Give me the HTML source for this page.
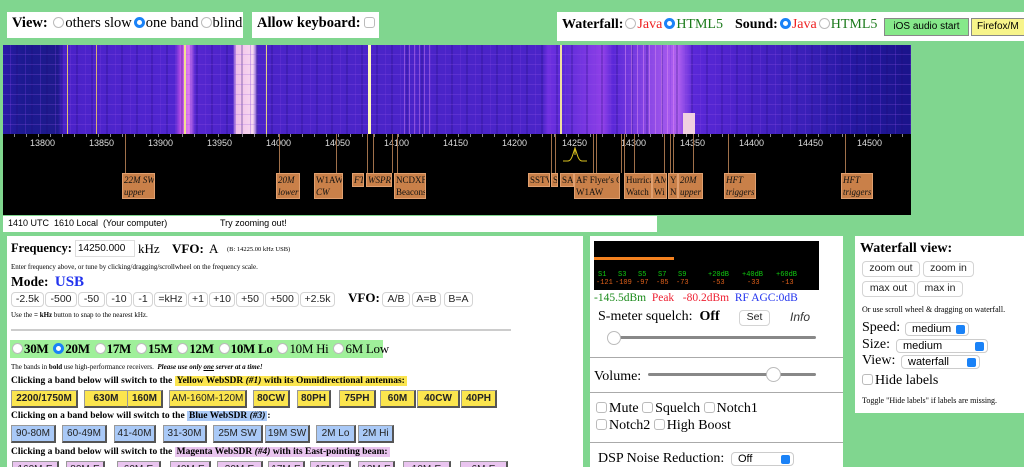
<!DOCTYPE html>
<html><head><meta charset="utf-8"><style>
*{margin:0;padding:0;box-sizing:border-box}
html,body{width:1024px;height:467px;overflow:hidden}
body{background:#80d68f;position:relative;font-family:"Liberation Serif",serif;color:#000}
.a{position:absolute;white-space:nowrap}
.box{position:absolute;background:#fff}
.s{font-family:"Liberation Sans",sans-serif}
.b{font-weight:bold}
.btn{position:absolute;background:#fff;border:1px solid #d4d4d4;border-radius:4px;font:10.5px "Liberation Sans",sans-serif;text-align:center;line-height:13px;color:#222;white-space:nowrap}
.bb{position:absolute;border:1px solid #999;border-right:2px solid #555;border-bottom:2px solid #555;font:bold 10px "Liberation Sans",sans-serif;text-align:center;line-height:15px;color:#222;white-space:nowrap;overflow:hidden}
.y{background:#fbe54e}.bl{background:#a9c9f7;font-weight:normal}.m{background:#e9c4ef;font-weight:normal}
.rad{display:inline-block;width:11px;height:11px;border-radius:50%;border:1px solid #bbb;background:#fff;vertical-align:-1px;margin:0 1px 0 2px}
.on{border:3.5px solid #1a82f7}
.cb{display:inline-block;width:11px;height:11px;border-radius:3px;border:1px solid #bbb;background:#fff;vertical-align:-1px;margin-right:2px}
.lab{position:absolute;top:173px;height:26px;background:#c98049;border:1px solid #e0a070;font:italic 9px/12px "Liberation Serif",serif;color:#111;overflow:hidden;padding-left:1px;white-space:nowrap}
.ln{position:absolute;top:134px;width:1px;background:#a0704a}
.tk{position:absolute;top:138px;color:#ddd;font:9px "Liberation Sans",sans-serif}
.hr{position:absolute;height:1px;background:#aaa}
.sel{position:absolute;background:#fff;border:1px solid #ccc;border-radius:4px;font:11px "Liberation Sans",sans-serif;line-height:13px;padding-left:6px}
.sel i{position:absolute;right:3px;top:2px;width:9px;height:9px;border-radius:2px;background:#1a82f7}
.hd{font-size:9.5px;font-weight:bold}
</style></head><body>

<div class="box" style="left:7px;top:12px;width:236px;height:26px"></div>
<div class="a" style="left:12px;top:15px;font-size:14.5px"><b>View:</b> <span class="rad"></span>others slow<span class="rad on"></span>one band<span class="rad"></span>blind</div>
<div class="box" style="left:252px;top:12px;width:127px;height:26px"></div>
<div class="a b" style="left:257px;top:15px;font-size:14.5px">Allow keyboard: <span class="cb"></span></div>

<div class="box" style="left:557px;top:12px;width:467px;height:29px"></div>
<div class="a" style="left:562px;top:17px;font-size:14px"><b>Waterfall:</b><span class="rad"></span><span style="color:#e22">Java</span><span class="rad on"></span><span style="color:#1a7a1a">HTML5</span></div>
<div class="a" style="left:735px;top:17px;font-size:14px"><b>Sound:</b><span class="rad on"></span><span style="color:#e22">Java</span><span class="rad"></span><span style="color:#1a7a1a">HTML5</span></div>
<div class="a s" style="left:884px;top:18px;width:85px;height:18px;background:#86e98a;border:1px solid #888;font-size:10px;line-height:16px;text-align:center">iOS audio start</div>
<div class="a s" style="left:971px;top:18px;width:60px;height:18px;background:#f7f48a;border:1px solid #888;font-size:10px;line-height:16px;padding-left:5px">Firefox/M</div>

<!-- waterfall -->
<div class="a" style="left:3px;top:45px;width:908px;height:89px;background:linear-gradient(90deg,#2a1aa8 0px,#1c1a90 20px,#1e1a8c 55px,#4a22c8 60px,#5026d0 172px,#c050e8 178px,#e080f0 186px,#5526d0 192px,#4a24c8 230px,#f0c0e8 233px,#f8d8f0 250px,#4a24c8 255px,#4a24c8 540px,#7030e0 545px,#5a2ad8 560px,#9040e8 600px,#5a28d8 610px,#b060f0 675px,#5a28d8 690px,#4a22c8 740px,#3a20b8 800px,#2418a0 850px,#1a148a 908px)"></div>
<div class="a" style="left:3px;top:45px;width:908px;height:89px;background:repeating-linear-gradient(0deg,transparent 0 9px,rgba(150,90,230,.25) 9px 10px),repeating-linear-gradient(90deg,transparent 0 7px,rgba(120,60,220,.3) 7px 8px,transparent 8px 13px,rgba(30,10,120,.25) 13px 15px)"></div>
<div class="a" style="left:67px;top:45px;width:1px;height:89px;background:#e0c070"></div>
<div class="a" style="left:96px;top:45px;width:1px;height:89px;background:#d8b070"></div>
<div class="a" style="left:184px;top:45px;width:2px;height:89px;background:#f0e090"></div>
<div class="a" style="left:266px;top:45px;width:1px;height:89px;background:#e0d080"></div>
<div class="a" style="left:368px;top:45px;width:3px;height:89px;background:#fff8c0"></div>
<div class="a" style="left:560px;top:45px;width:2px;height:89px;background:#f0e0a0"></div>
<div class="a" style="left:683px;top:113px;width:12px;height:21px;background:#f0d0e0"></div>
<div class="a" style="left:400px;top:45px;width:30px;height:89px;background:repeating-linear-gradient(90deg,transparent 0 4px,rgba(200,120,240,.5) 4px 5px)"></div>
<div class="a" style="left:620px;top:45px;width:55px;height:89px;background:repeating-linear-gradient(90deg,transparent 0 5px,rgba(220,140,240,.5) 5px 6px)"></div>

<!-- scale -->
<div class="a" style="left:3px;top:134px;width:908px;height:81px;background:#000"></div>
<div class="a" style="left:3px;top:134px;width:908px;height:3px;background:repeating-linear-gradient(90deg,transparent 0 11px,#888 11px 12px)"></div>
<div class="tk" style="left:30px">13800</div><div class="tk" style="left:89px">13850</div><div class="tk" style="left:148px">13900</div><div class="tk" style="left:207px">13950</div><div class="tk" style="left:266px">14000</div><div class="tk" style="left:325px">14050</div><div class="tk" style="left:384px">14100</div><div class="tk" style="left:443px">14150</div><div class="tk" style="left:502px">14200</div><div class="tk" style="left:562px">14250</div><div class="tk" style="left:621px">14300</div><div class="tk" style="left:680px">14350</div><div class="tk" style="left:739px">14400</div><div class="tk" style="left:798px">14450</div><div class="tk" style="left:857px">14500</div>
<svg class="a" style="left:562px;top:146px" width="26" height="16"><path d="M1 15 H6 Q9 15 11 8 L13 2 L15 8 Q17 15 20 15 H25 M13 2 V9" stroke="#d8c020" fill="none"/></svg>
<div class="ln" style="left:125px;height:39px"></div><div class="ln" style="left:279px;height:39px"></div><div class="ln" style="left:336px;height:39px"></div><div class="ln" style="left:367px;height:39px"></div><div class="ln" style="left:373px;height:39px"></div><div class="ln" style="left:392px;height:39px"></div><div class="ln" style="left:397px;height:39px"></div>
<div class="ln" style="left:551px;height:39px"></div><div class="ln" style="left:555px;height:39px"></div><div class="ln" style="left:593px;height:39px"></div><div class="ln" style="left:596px;height:39px"></div><div class="ln" style="left:621px;height:39px"></div><div class="ln" style="left:624px;height:39px"></div><div class="ln" style="left:634px;height:39px"></div><div class="ln" style="left:664px;height:39px"></div><div class="ln" style="left:670px;height:39px"></div><div class="ln" style="left:673px;height:39px"></div><div class="ln" style="left:693px;height:39px"></div><div class="ln" style="left:728px;height:39px"></div><div class="ln" style="left:845px;height:39px"></div>
<div class="lab" style="left:122px;width:33px">22M SW<br>upper</div>
<div class="lab" style="left:276px;width:24px">20M<br>lower</div>
<div class="lab" style="left:314px;width:29px;font-style:normal">W1AW<br><i>CW</i></div>
<div class="lab" style="left:352px;width:12px;height:14px">FT</div>
<div class="lab" style="left:366px;width:26px;height:14px">WSPR</div>
<div class="lab" style="left:394px;width:32px;font-style:normal">NCDXF<br>Beacons</div>
<div class="lab" style="left:528px;width:22px;height:14px;font-style:normal">SSTV</div>
<div class="lab" style="left:551px;width:7px;height:14px;font-style:normal">S</div>
<div class="lab" style="left:560px;width:14px;height:14px;font-style:normal">SA</div>
<div class="lab" style="left:574px;width:46px;font-style:normal">AF Flyer's C<br>W1AW</div>
<div class="lab" style="left:624px;width:28px;font-style:normal">Hurrica<br>Watch</div>
<div class="lab" style="left:652px;width:15px;font-style:normal">AM<br>Wi</div>
<div class="lab" style="left:668px;width:10px;font-style:normal">Y<br>N</div>
<div class="lab" style="left:678px;width:25px">20M<br>upper</div>
<div class="lab" style="left:724px;width:32px">HFT<br>triggers</div>
<div class="lab" style="left:841px;width:32px">HFT<br>triggers</div>

<div class="box" style="left:3px;top:216px;width:654px;height:16px"></div>
<div class="a s" style="left:8px;top:218px;font-size:9px">1410 UTC&nbsp; 1610 Local&nbsp; (Your computer)</div>
<div class="a s" style="left:220px;top:218px;font-size:9px">Try zooming out!</div>

<!-- left panel -->
<div class="box" style="left:7px;top:236px;width:576px;height:231px"></div>
<div class="a b" style="left:11px;top:241px;font-size:12.5px">Frequency:</div>
<div class="a s" style="left:75px;top:240px;width:60px;height:17px;border:1px solid #ddd;font-size:10px;line-height:15px;padding-left:2px">14250.000</div>
<div class="a" style="left:138px;top:241px;font-size:13px">kHz</div>
<div class="a b" style="left:172px;top:241px;font-size:13px">VFO:</div>
<div class="a" style="left:209px;top:241px;font-size:13px">A</div>
<div class="a" style="left:227px;top:246px;font-size:6.5px">(B: 14225.00 kHz USB)</div>
<div class="a" style="left:11px;top:263px;font-size:7px">Enter frequency above, or tune by clicking/dragging/scrollwheel on the frequency scale.</div>
<div class="a b" style="left:11px;top:274px;font-size:13.5px">Mode: <span style="color:#2233ee;font-size:15px;margin-left:3px">USB</span></div>
<div class="btn" style="left:11px;top:292px;width:33px;height:15px">-2.5k</div><div class="btn" style="left:45px;top:292px;width:32px;height:15px">-500</div><div class="btn" style="left:78px;top:292px;width:27px;height:15px">-50</div><div class="btn" style="left:106px;top:292px;width:26px;height:15px">-10</div><div class="btn" style="left:133px;top:292px;width:20px;height:15px">-1</div><div class="btn" style="left:154px;top:292px;width:33px;height:15px">=kHz</div><div class="btn" style="left:188px;top:292px;width:20px;height:15px">+1</div><div class="btn" style="left:209px;top:292px;width:26px;height:15px">+10</div><div class="btn" style="left:236px;top:292px;width:28px;height:15px">+50</div><div class="btn" style="left:265px;top:292px;width:34px;height:15px">+500</div><div class="btn" style="left:300px;top:292px;width:35px;height:15px">+2.5k</div>
<div class="a b" style="left:348px;top:290px;font-size:13px">VFO:</div>
<div class="btn" style="left:382px;top:292px;width:28px;height:15px">A/B</div><div class="btn" style="left:412px;top:292px;width:29px;height:15px">A=B</div><div class="btn" style="left:444px;top:292px;width:29px;height:15px">B=A</div>
<div class="a" style="left:11px;top:311px;font-size:7px">Use the <b>= kHz</b> button to snap to the nearest kHz.</div>
<div class="hr" style="left:11px;top:329px;width:500px;height:2px;background:#ccc"></div>
<div class="a" style="left:10px;top:340px;width:373px;height:18px;background:#9ff09a"></div>
<div class="a" style="left:10px;top:341px;font-size:13px;font-weight:bold;letter-spacing:-0.3px"><span class="rad"></span>30M <span class="rad on"></span>20M <span class="rad"></span>17M <span class="rad"></span>15M <span class="rad"></span>12M <span class="rad"></span>10M Lo <span style="font-weight:normal"><span class="rad"></span>10M Hi <span class="rad"></span>6M Low</span></div>
<div class="a" style="left:11px;top:363px;font-size:7px">The bands in <b>bold</b> use high-performance receivers.&nbsp; <b><i>Please use only <u>one</u> server at a time!</i></b></div>
<div class="a hd" style="left:11px;top:376px">Clicking a band below will switch to the <span style="background:#fbe54e;padding:0 2px">Yellow WebSDR <i>(#1)</i> with its Omnidirectional antennas:</span></div>
<div class="bb y" style="left:11px;top:390px;width:67px;height:18px">2200/1750M</div><div class="bb y" style="left:84px;top:390px;width:45px;height:18px">630M</div><div class="bb y" style="left:127px;top:390px;width:36px;height:18px">160M</div><div class="bb y" style="left:169px;top:390px;width:78px;height:18px;font-weight:normal">AM-160M-120M</div><div class="bb y" style="left:253px;top:390px;width:37px;height:18px">80CW</div><div class="bb y" style="left:297px;top:390px;width:34px;height:18px">80PH</div><div class="bb y" style="left:339px;top:390px;width:37px;height:18px">75PH</div><div class="bb y" style="left:380px;top:390px;width:36px;height:18px">60M</div><div class="bb y" style="left:417px;top:390px;width:43px;height:18px">40CW</div><div class="bb y" style="left:461px;top:390px;width:36px;height:18px">40PH</div>
<div class="a hd" style="left:11px;top:411px">Clicking on a band below will switch to the <span style="background:#a9c9f7;padding:0 2px">Blue WebSDR <i>(#3)</i></span>:</div>
<div class="bb bl" style="left:11px;top:425px;width:45px;height:18px">90-80M</div><div class="bb bl" style="left:62px;top:425px;width:45px;height:18px">60-49M</div><div class="bb bl" style="left:114px;top:425px;width:42px;height:18px">41-40M</div><div class="bb bl" style="left:163px;top:425px;width:44px;height:18px">31-30M</div><div class="bb bl" style="left:213px;top:425px;width:50px;height:18px">25M SW</div><div class="bb bl" style="left:265px;top:425px;width:45px;height:18px">19M SW</div><div class="bb bl" style="left:316px;top:425px;width:40px;height:18px">2M Lo</div><div class="bb bl" style="left:358px;top:425px;width:36px;height:18px">2M Hi</div>
<div class="a hd" style="left:11px;top:447px">Clicking a band below will switch to the <span style="background:#e9c4ef;padding:0 2px">Magenta WebSDR <i>(#4)</i> with its East-pointing beam:</span></div>
<div class="bb m" style="left:12px;top:461px;width:47px;height:18px">160M-E</div><div class="bb m" style="left:66px;top:461px;width:39px;height:18px">80M-E</div><div class="bb m" style="left:117px;top:461px;width:44px;height:18px">60M-E</div><div class="bb m" style="left:170px;top:461px;width:41px;height:18px">40M-E</div><div class="bb m" style="left:217px;top:461px;width:46px;height:18px">30M-E</div><div class="bb m" style="left:268px;top:461px;width:37px;height:18px">17M-E</div><div class="bb m" style="left:310px;top:461px;width:41px;height:18px">15M-E</div><div class="bb m" style="left:358px;top:461px;width:37px;height:18px">12M-E</div><div class="bb m" style="left:403px;top:461px;width:48px;height:18px">10M-E</div><div class="bb m" style="left:460px;top:461px;width:48px;height:18px">6M-E</div>

<!-- middle panel -->
<div class="box" style="left:590px;top:236px;width:253px;height:231px"></div>
<div class="a" style="left:594px;top:241px;width:225px;height:49px;background:#000"></div>
<div class="a" style="left:594px;top:257px;width:80px;height:3px;background:#f58220"></div>
<div class="a" style="left:598px;top:271px;font:7px 'Liberation Mono',monospace;color:#1c1">
<span class="a" style="left:0">S1</span><span class="a" style="left:20px">S3</span><span class="a" style="left:40px">S5</span><span class="a" style="left:60px">S7</span><span class="a" style="left:80px">S9</span><span class="a" style="left:110px">+20dB</span><span class="a" style="left:144px">+40dB</span><span class="a" style="left:178px">+60dB</span></div>
<div class="a" style="left:596px;top:279px;font:7px 'Liberation Mono',monospace;color:#e0601a">
<span class="a" style="left:0">-121</span><span class="a" style="left:19px">-109</span><span class="a" style="left:40px">-97</span><span class="a" style="left:60px">-85</span><span class="a" style="left:80px">-73</span><span class="a" style="left:116px">-53</span><span class="a" style="left:151px">-33</span><span class="a" style="left:185px">-13</span></div>
<div class="a" style="left:594px;top:292px;font-size:11.5px"><span style="color:#1a8a1a">-145.5dBm</span> <span style="color:#ee2233">&nbsp;Peak &nbsp;&nbsp;-80.2dBm</span> <span style="color:#2233ee">&nbsp;RF AGC:0dB</span></div>
<div class="a" style="left:598px;top:309px;font-size:14px">S-meter squelch:&nbsp; <b>Off</b></div>
<div class="btn" style="left:739px;top:310px;width:31px;height:16px">Set</div>
<div class="a s" style="left:790px;top:310px;font-size:12px;font-style:italic;color:#333">Info</div>
<div class="a" style="left:610px;top:336px;width:206px;height:3px;background:#888;border-radius:2px"></div>
<div class="a" style="left:607px;top:331px;width:14px;height:14px;border-radius:50%;background:#fff;border:1px solid #bbb"></div>
<div class="hr" style="left:590px;top:357px;width:253px"></div>
<div class="a" style="left:594px;top:369px;font-size:14px">Volume:</div>
<div class="a" style="left:648px;top:373px;width:168px;height:3px;background:#888;border-radius:2px"></div>
<div class="a" style="left:766px;top:367px;width:15px;height:15px;border-radius:50%;background:#fff;border:1px solid #bbb"></div>
<div class="hr" style="left:590px;top:392px;width:253px"></div>
<div class="a" style="left:596px;top:401px;font-size:14px"><span class="cb"></span>Mute <span class="cb"></span>Squelch <span class="cb"></span>Notch1</div>
<div class="a" style="left:596px;top:418px;font-size:14px"><span class="cb"></span>Notch2 <span class="cb"></span>High Boost</div>
<div class="hr" style="left:590px;top:442px;width:253px"></div>
<div class="a" style="left:598px;top:451px;font-size:14px">DSP Noise Reduction:</div>
<div class="sel" style="left:731px;top:452px;width:63px;height:14px">Off<i></i></div>

<!-- right panel -->
<div class="box" style="left:855px;top:236px;width:169px;height:177px"></div>
<div class="a b" style="left:860px;top:241px;font-size:14px">Waterfall view:</div>
<div class="btn" style="left:862px;top:261px;width:58px;height:16px">zoom out</div><div class="btn" style="left:923px;top:261px;width:51px;height:16px">zoom in</div>
<div class="btn" style="left:862px;top:281px;width:53px;height:16px">max out</div><div class="btn" style="left:917px;top:281px;width:46px;height:16px">max in</div>
<div class="a" style="left:862px;top:305px;font-size:8px">Or use scroll wheel &amp; dragging on waterfall.</div>
<div class="a" style="left:862px;top:320px;font-size:14px">Speed:</div><div class="sel" style="left:905px;top:322px;width:64px;height:14px">medium<i></i></div>
<div class="a" style="left:862px;top:337px;font-size:14px">Size:</div><div class="sel" style="left:896px;top:339px;width:92px;height:14px">medium<i></i></div>
<div class="a" style="left:862px;top:353px;font-size:14px">View:</div><div class="sel" style="left:901px;top:355px;width:79px;height:14px">waterfall<i></i></div>
<div class="a" style="left:862px;top:373px;font-size:14px"><span class="cb"></span>Hide labels</div>
<div class="a" style="left:862px;top:396px;font-size:8px">Toggle "Hide labels" if labels are missing.</div>
</body></html>
